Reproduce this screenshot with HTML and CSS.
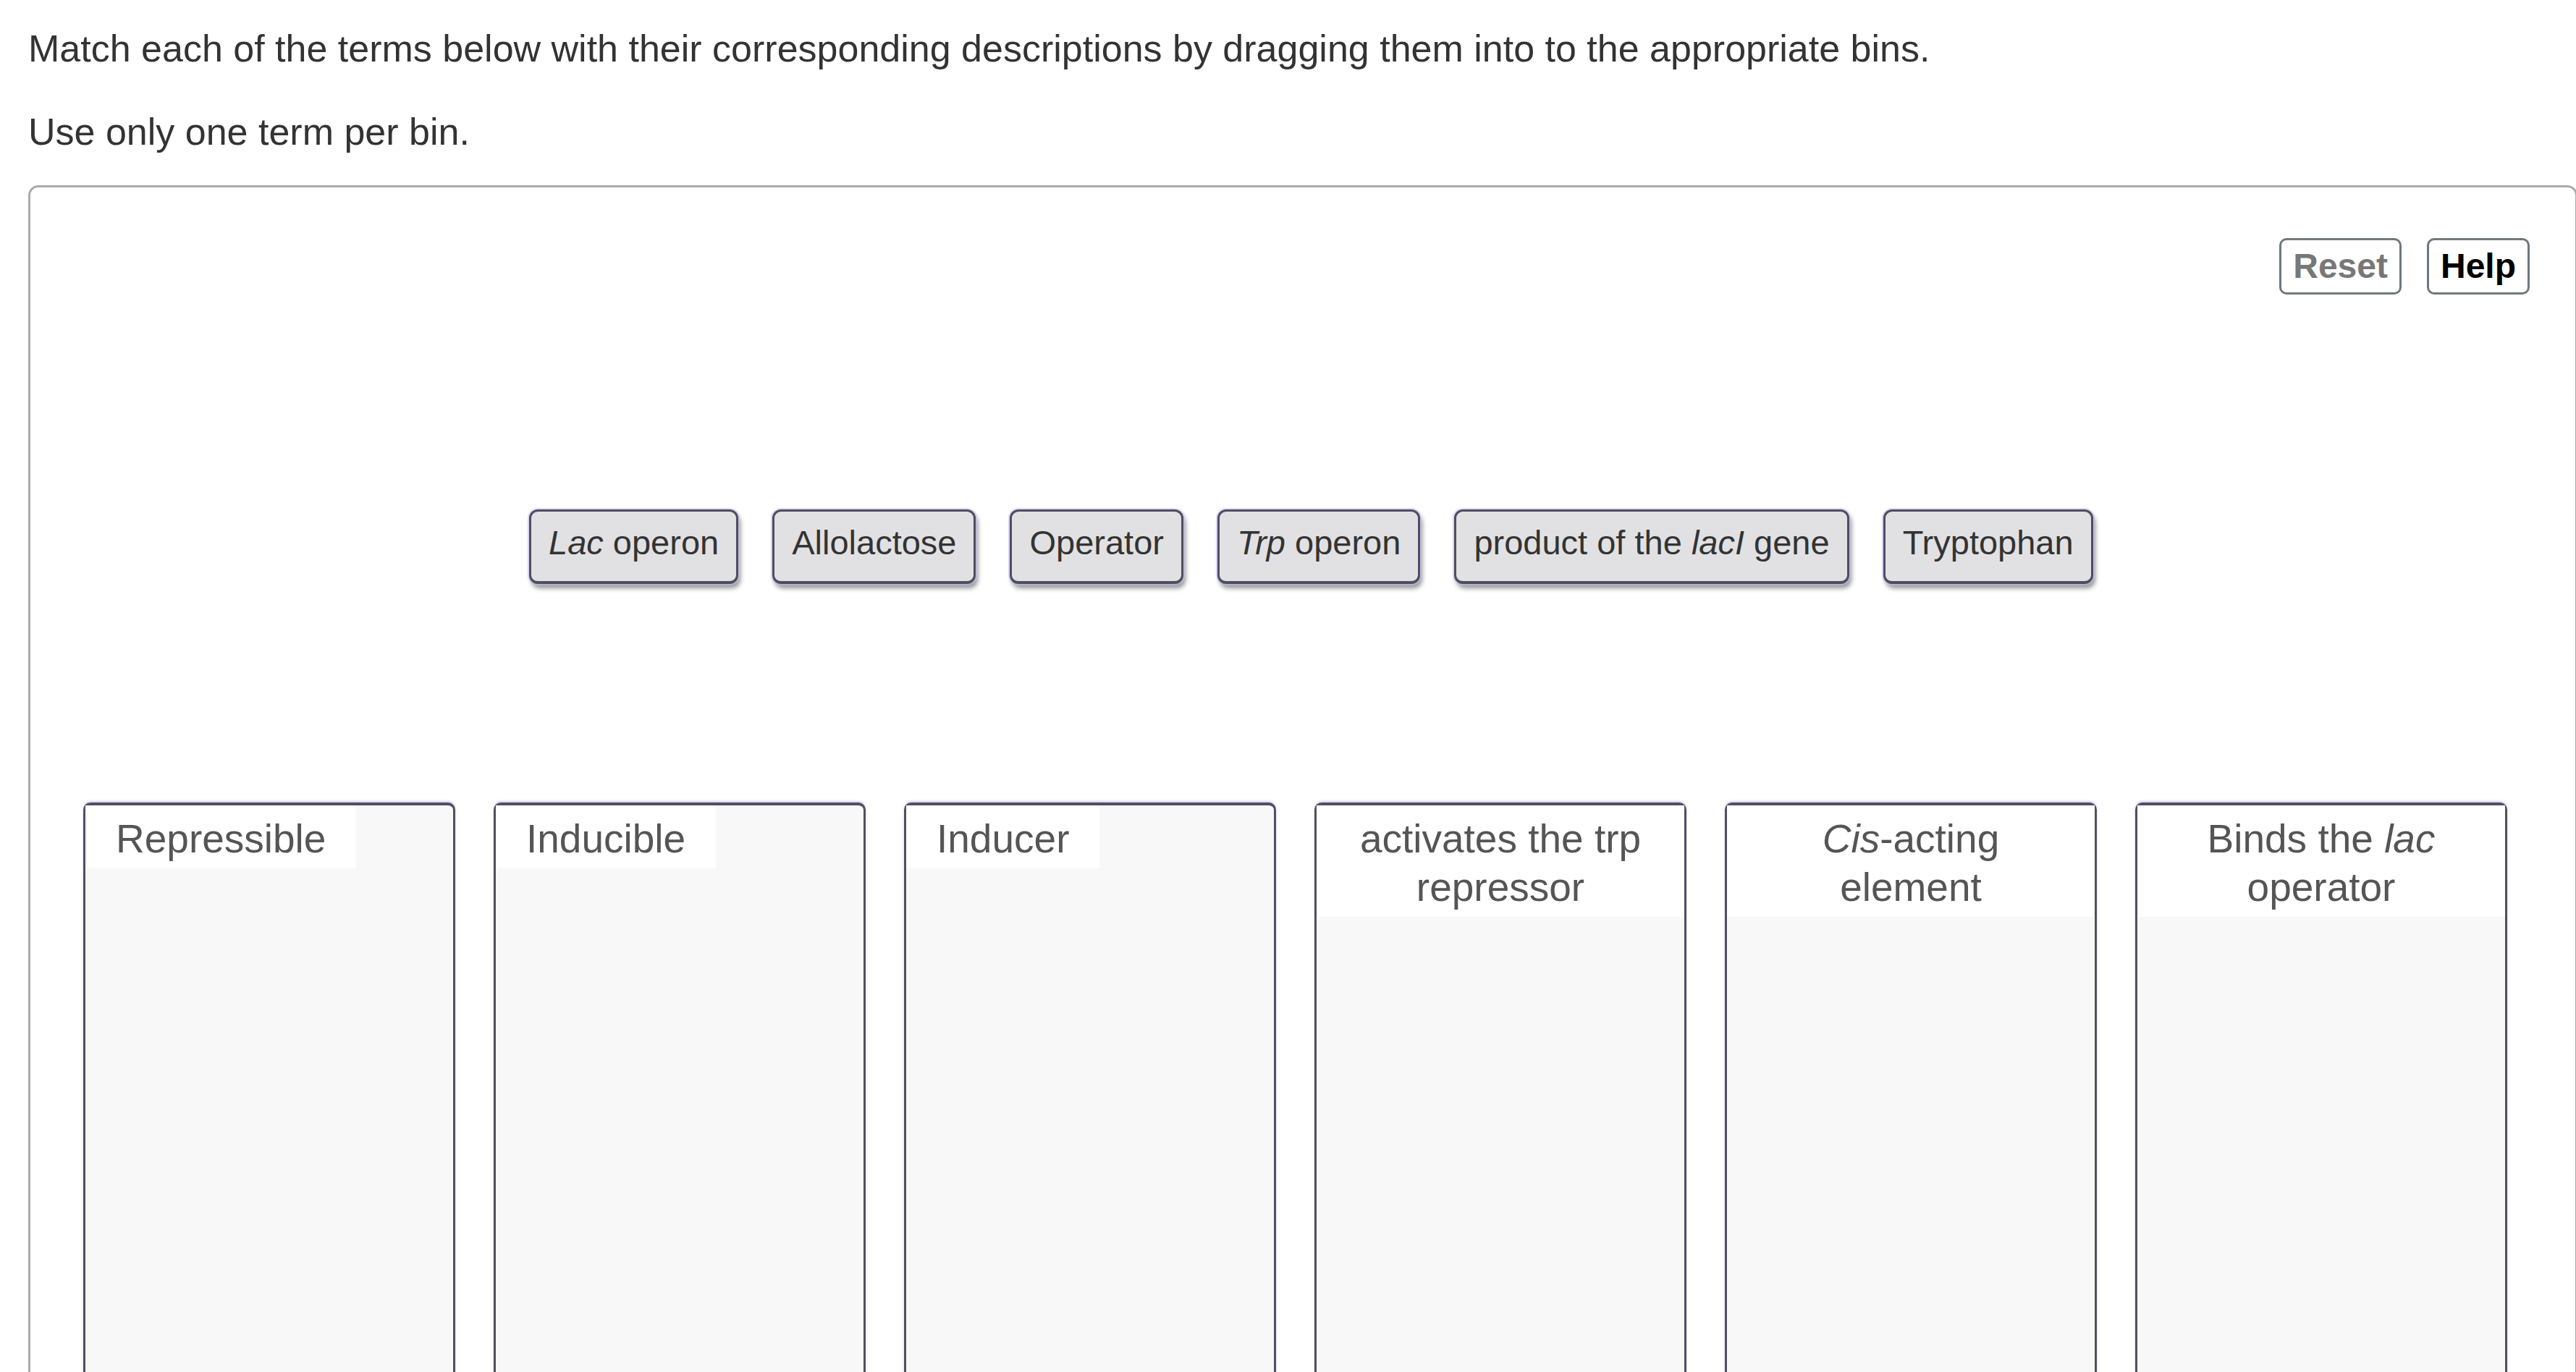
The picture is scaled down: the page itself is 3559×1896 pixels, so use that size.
FILE: index.html
```html
<!DOCTYPE html>
<html lang="en">
<head>
<meta charset="utf-8">
<title>Match terms</title>
<link rel="stylesheet" href="styles.css">
</head>
<body>
<p class="instr instr-first">Match each of the terms below with their corresponding descriptions by dragging them into to the appropriate bins.</p>
<p class="instr instr-second">Use only one term per bin.</p>
<div class="board">
  <div class="toolbar">
    <button class="btn btn-reset" type="button">Reset</button>
    <button class="btn btn-help" type="button">Help</button>
  </div>
  <div class="chips">
    <div class="chip"><i>Lac</i> operon</div>
    <div class="chip">Allolactose</div>
    <div class="chip">Operator</div>
    <div class="chip"><i>Trp</i> operon</div>
    <div class="chip">product of the <i>lacI</i> gene</div>
    <div class="chip">Tryptophan</div>
  </div>
  <div class="bins">
    <div class="bin"><div class="bin-label">Repressible</div></div>
    <div class="bin"><div class="bin-label">Inducible</div></div>
    <div class="bin"><div class="bin-label">Inducer</div></div>
    <div class="bin"><div class="bin-label bin-label-full">activates the trp<br>repressor</div></div>
    <div class="bin"><div class="bin-label bin-label-full"><i>Cis</i>-acting<br>element</div></div>
    <div class="bin"><div class="bin-label bin-label-full">Binds the <i>lac</i><br>operator</div></div>
  </div>
</div>
</body>
</html>
```
FILE: styles.css
```css
html, body {
  margin: 0;
  padding: 0;
  background: #ffffff;
}

body {
  width: 3559px;
  height: 1896px;
  overflow: hidden;
  font-family: "Liberation Sans", Arial, Helvetica, sans-serif;
  color: #333333;
}

.instr {
  margin: 0 0 0 39px;
  font-size: 52px;
  line-height: 62px;
  color: #333333;
}

.instr-first {
  padding-top: 36px;
}

.instr-second {
  margin-top: 53px;
}

.board {
  margin: 43px 0 0 39px;
  width: 3522px;
  height: 2000px;
  box-sizing: border-box;
  border: 3px solid #ababab;
  border-radius: 14px;
  background: #ffffff;
}

.toolbar {
  display: flex;
  justify-content: flex-end;
  gap: 35px;
  margin: 70px 63px 0 0;
}

.btn {
  height: 78px;
  box-sizing: border-box;
  padding: 0 16px;
  border: 3px solid #6f787d;
  border-radius: 10px;
  background: #ffffff;
  font-family: "Liberation Sans", Arial, sans-serif;
  font-weight: bold;
  font-size: 48px;
  line-height: 72px;
  cursor: pointer;
}

.btn-reset {
  color: #777777;
}

.btn-help {
  color: #000000;
}

.chips {
  display: flex;
  gap: 47px;
  margin-top: 297px;
  padding-left: 689px;
}

.chip {
  flex: none;
  height: 103px;
  box-sizing: border-box;
  padding: 0 24px;
  border: 3px solid #4e4e60;
  border-bottom-width: 4px;
  border-radius: 12px;
  background: #e1e1e3;
  font-size: 47px;
  line-height: 86px;
  color: #333333;
  white-space: nowrap;
  box-shadow: 0 0 0 2px rgba(200, 195, 240, 0.6), 3px 6px 6px rgba(0, 0, 0, 0.42);
}

.bins {
  display: flex;
  gap: 53px;
  margin-top: 302px;
  padding-left: 73px;
}

.bin {
  flex: none;
  width: 514px;
  height: 900px;
  box-sizing: border-box;
  border: 3px solid #50505f;
  border-top-width: 4px;
  border-bottom: none;
  border-radius: 10px 10px 0 0;
  background: #f8f8f8;
  box-shadow: 0 -2px 3px rgba(170, 160, 235, 0.5);
}

.bin-label {
  width: fit-content;
  max-width: 100%;
  box-sizing: border-box;
  padding: 13px 42px 7px;
  background: #ffffff;
  font-size: 55px;
  line-height: 67px;
  color: #555555;
  text-align: center;
}

.bin-label-full {
  width: 100%;
}
```
